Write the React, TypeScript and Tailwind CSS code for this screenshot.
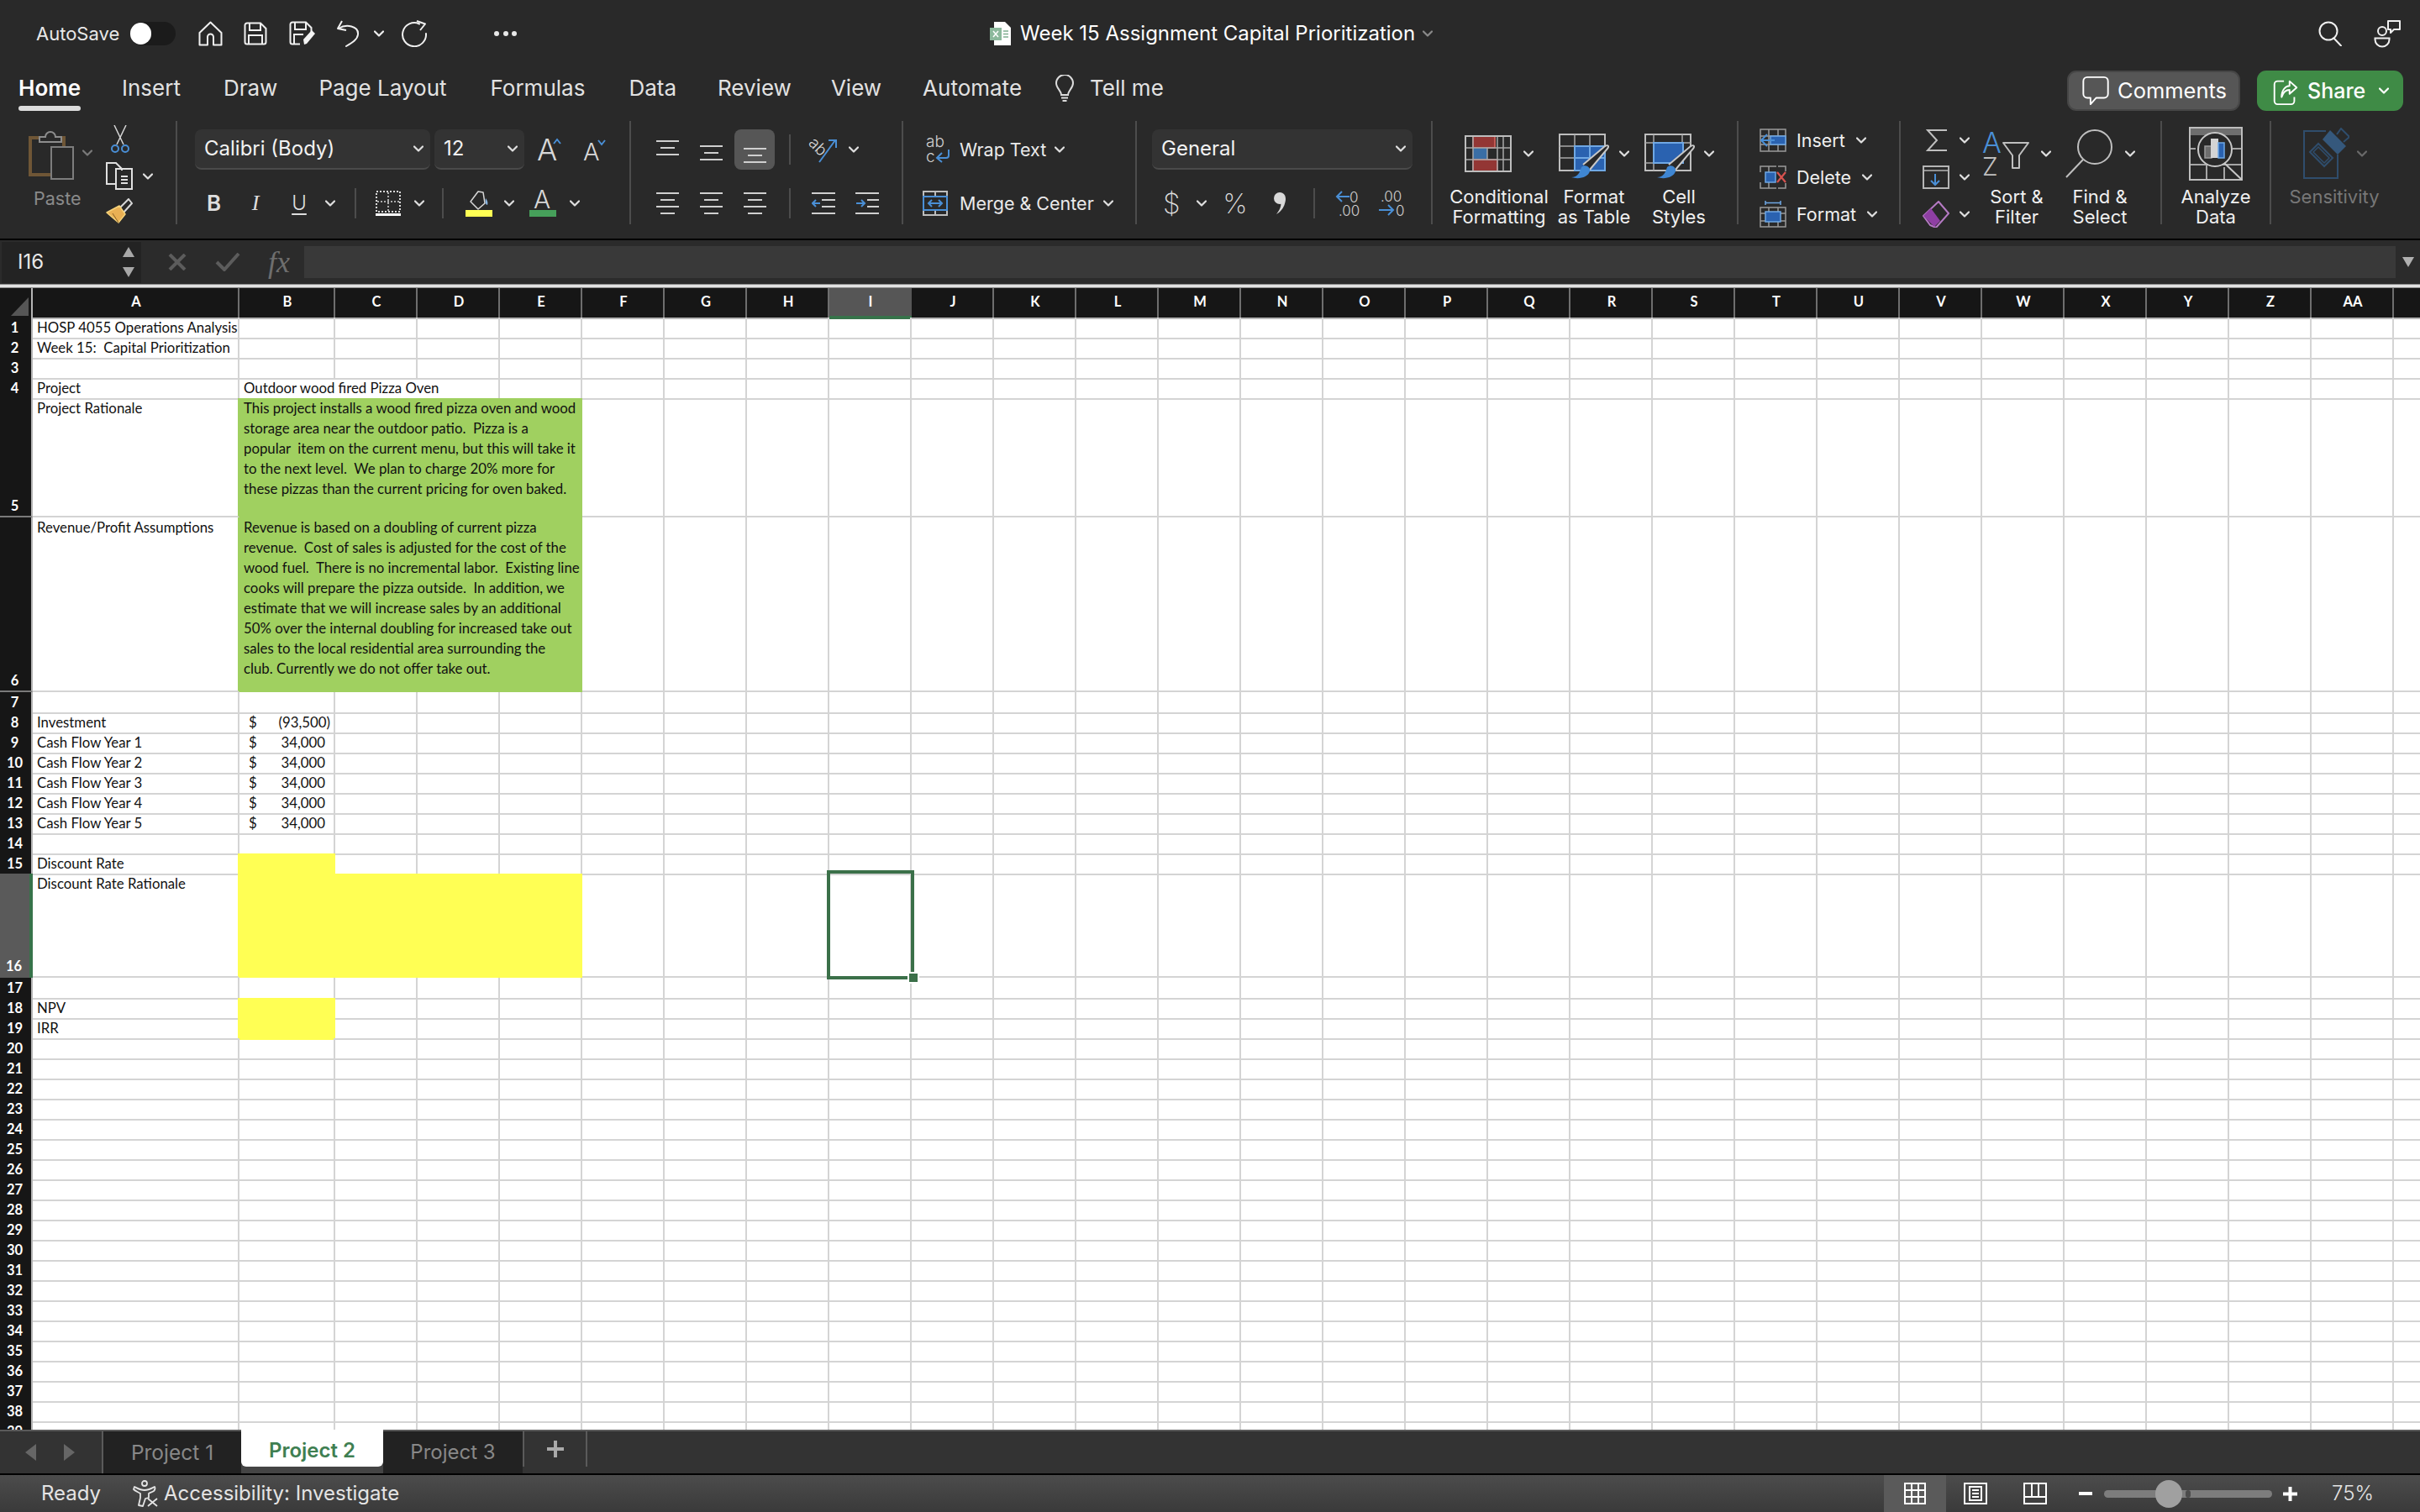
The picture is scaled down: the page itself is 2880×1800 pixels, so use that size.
import React from "react";

const GRID = "border-[#d4d4d4]";
const COLS = ["C","D","E","F","G","H","I","J","K","L","M","N","O","P","Q","R","S","T","U","V","W","X","Y","Z","AA",""];
const ROWS = Array.from({ length: 39 }, (_, i) => i + 1);

const LABELS: Record<number, string> = {
  1: "HOSP 4055 Operations Analysis",
  2: "Week 15:  Capital Prioritization",
  4: "Project",
  5: "Project Rationale",
  6: "Revenue/Profit Assumptions",
  8: "Investment",
  9: "Cash Flow Year 1",
  10: "Cash Flow Year 2",
  11: "Cash Flow Year 3",
  12: "Cash Flow Year 4",
  13: "Cash Flow Year 5",
  15: "Discount Rate",
  16: "Discount Rate Rationale",
  18: "NPV",
  19: "IRR",
};

const RATIONALE = [
  "This project installs a wood fired pizza oven and wood",
  "storage area near the outdoor patio.  Pizza is a",
  "popular  item on the current menu, but this will take it",
  "to the next level.  We plan to charge 20% more for",
  "these pizzas than the current pricing for oven baked.",
];

const ASSUMPTIONS = [
  "Revenue is based on a doubling of current pizza",
  "revenue.  Cost of sales is adjusted for the cost of the",
  "wood fuel.  There is no incremental labor.  Existing line",
  "cooks will prepare the pizza outside.  In addition, we",
  "estimate that we will increase sales by an additional",
  "50% over the internal doubling for increased take out",
  "sales to the local residential area surrounding the",
  "club. Currently we do not offer take out.",
];

function rowHeight(n: number) {
  if (n === 5) return "h-[142px]";
  if (n === 6) return "h-[208px]";
  if (n === 16) return "h-[124px]";
  return "h-[24px]";
}

function Chev({ className = "", color = "#e0e0e0" }: { className?: string; color?: string }) {
  return (
    <svg viewBox="0 0 12 8" fill="none" className={`w-[12px] h-[8px] shrink-0 ${className}`}>
      <path d="M1 1.5 6 6.5 11 1.5" stroke={color} strokeWidth="2.2" strokeLinecap="round" strokeLinejoin="round" />
    </svg>
  );
}

function Divider() {
  return <div className="w-[2px] h-[123px] bg-[#4c4c4c] shrink-0" />;
}

function ShortDivider({ className = "" }: { className?: string }) {
  return <div className={`w-[2px] h-[36px] bg-[#4c4c4c] shrink-0 ${className}`} />;
}

function Lines({ y, className = "" }: { y: number[]; className?: string }) {
  return (
    <svg viewBox="0 0 27 26" className={`w-[27px] h-[26px] shrink-0 ${className}`}>
      {y.map((v, i) => (
        <rect key={i} x={i % 2 === 0 ? 0 : 5} y={v} width={i % 2 === 0 ? 27 : 17} height="2" fill="#cfcfcf" />
      ))}
    </svg>
  );
}

function TitleBar() {
  return (
    <div className="h-[80px] flex items-center text-[#e8e8e8] shrink-0">
      <span className="ml-[43px] w-[112px] text-[22px] leading-[30px]">AutoSave</span>
      <div className="w-[54px] h-[28px] rounded-full bg-[#1b1b1b] flex items-center">
        <div className="w-[25px] h-[26px] rounded-full bg-white" />
      </div>
      <svg viewBox="0 0 29 30" fill="none" stroke="#f0f0f0" strokeWidth="2" className="ml-[27px] w-[29px] h-[30px]">
        <path d="M1.5 14 14.5 1.5 27.5 14V28.5H18V19a3.5 3.5 0 0 0-7 0V28.5H1.5Z" strokeLinejoin="round" />
      </svg>
      <svg viewBox="0 0 28 28" fill="none" stroke="#f0f0f0" strokeWidth="2" className="ml-[25px] w-[28px] h-[28px]">
        <path d="M4 1.5H20L26.5 8V24a2.5 2.5 0 0 1-2.5 2.5H4A2.5 2.5 0 0 1 1.5 24V4A2.5 2.5 0 0 1 4 1.5Z" />
        <path d="M7 1.5V10H20V1.5M6 26.5V16H22V26.5" />
      </svg>
      <svg viewBox="0 0 32 30" fill="none" className="ml-[26px] w-[32px] h-[30px]">
        <path d="M13 27.5H4A2.5 2.5 0 0 1 1.5 25V4A2.5 2.5 0 0 1 4 1.5H20L26.5 8V13" stroke="#f0f0f0" strokeWidth="2" />
        <path d="M7 1.5V10H20V1.5M6 27V16H17" stroke="#f0f0f0" strokeWidth="2" />
        <path d="M18 28 17 22 27 11 31 15 21 27Z" fill="#f4f4f4" />
      </svg>
      <svg viewBox="0 0 28 32" fill="none" stroke="#f0f0f0" strokeWidth="2" className="ml-[24px] w-[28px] h-[32px]">
        <path d="M7 1 2 10 12 12" strokeLinejoin="round" />
        <path d="M3 10C12 4 27 7 26 17 25.5 23 19 27 12 31" strokeLinecap="round" />
      </svg>
      <Chev className="ml-[17px]" color="#f0f0f0" />
      <svg viewBox="0 0 32 32" fill="none" stroke="#f0f0f0" strokeWidth="2" className="ml-[20px] w-[32px] h-[32px]">
        <path d="M22 4.5A14 14 0 1 0 30 16" strokeLinecap="round" />
        <path d="M19 1 29 4.5 23 12" strokeLinejoin="round" />
      </svg>
      <div className="ml-[79px] w-[27px] flex justify-between">
        <div className="w-[6px] h-[6px] rounded-full bg-[#e8e8e8]" />
        <div className="w-[6px] h-[6px] rounded-full bg-[#e8e8e8]" />
        <div className="w-[6px] h-[6px] rounded-full bg-[#e8e8e8]" />
      </div>
      <svg viewBox="0 0 26 30" className="ml-[563px] w-[26px] h-[30px]">
        <path d="M5 1H18L25 8V29H5Z" fill="#ffffff" />
        <rect x="0" y="8" width="14" height="15" fill="#8cb99c" />
        <path d="M4 12 10 19M10 12 4 19" stroke="#ffffff" strokeWidth="1.5" />
        <path d="M16 12H22M16 15.5H22M16 19H22" stroke="#7fae90" strokeWidth="1.5" />
      </svg>
      <span className="ml-[10px] w-[470px] text-[24px] leading-[32px] text-white whitespace-nowrap">Week 15 Assignment Capital Prioritization</span>
      <Chev className="ml-[9px]" color="#8a8a8a" />
      <svg viewBox="0 0 28 30" fill="none" stroke="#efefef" strokeWidth="2" className="ml-[1054px] w-[28px] h-[30px]">
        <circle cx="12" cy="12" r="10.5" />
        <path d="M18.5 20.5 27 29.5" strokeLinecap="round" />
      </svg>
      <svg viewBox="0 0 33 34" fill="none" stroke="#efefef" strokeWidth="2" className="ml-[38px] w-[33px] h-[34px]">
        <circle cx="10" cy="14" r="5" />
        <path d="M1.5 22.5H18.5V24A8.5 8.5 0 0 1 1.5 24Z" />
        <path d="M17 2H31V12H24L20 16V12H17Z" strokeLinejoin="round" />
      </svg>
    </div>
  );
}

function RibbonTabs() {
  const tabs: [string, string][] = [
    ["Insert", "ml-[49px]"],
    ["Draw", "ml-[51px]"],
    ["Page Layout", "ml-[49px]"],
    ["Formulas", "ml-[52px]"],
    ["Data", "ml-[52px]"],
    ["Review", "ml-[49px]"],
    ["View", "ml-[47px]"],
    ["Automate", "ml-[49px]"],
  ];
  return (
    <div className="h-[64px] flex items-start shrink-0 text-[#e2e2e2]">
      <div className="ml-[22px] mt-[9px] flex flex-col">
        <span className="text-[26px] leading-[32px] font-semibold text-white">Home</span>
        <div className="mt-[5px] h-[6px] rounded-full bg-[#dcdcdc]" />
      </div>
      {tabs.map(([name, margin]) => (
        <span key={name} className={`${margin} mt-[9px] text-[26px] leading-[32px] whitespace-nowrap`}>{name}</span>
      ))}
      <svg viewBox="0 0 24 32" fill="none" stroke="#dcdcdc" strokeWidth="2" className="ml-[39px] mt-[9px] w-[24px] h-[32px]">
        <path d="M8 24C8 19 2 16 2 10A10 10 0 0 1 22 10C22 16 16 19 16 24Z" />
        <path d="M8 27.5H16M9.5 31H14.5" />
      </svg>
      <span className="ml-[18px] mt-[9px] text-[26px] leading-[32px] whitespace-nowrap">Tell me</span>
      <div className="ml-auto mt-[4px] w-[206px] h-[48px] rounded-[11px] bg-[#565656] border-2 border-[#464646] flex items-center text-white">
        <svg viewBox="0 0 34 38" fill="none" stroke="#ffffff" strokeWidth="2" className="ml-[16px] w-[33px] h-[36px]">
          <path d="M6 2H27A5 5 0 0 1 32 7V23A5 5 0 0 1 27 28H17L10 36V28H6A5 5 0 0 1 1 23V7A5 5 0 0 1 6 2Z" strokeLinejoin="round" />
        </svg>
        <span className="ml-[9px] text-[25.5px] leading-[32px]">Comments</span>
      </div>
      <div className="ml-[20px] mr-[20px] mt-[4px] w-[174px] h-[48px] rounded-[11px] bg-[#3f8b46] flex items-center text-white">
        <svg viewBox="0 0 30 38" fill="none" stroke="#ffffff" strokeWidth="2" className="ml-[19px] w-[30px] h-[36px]">
          <path d="M13 7H5A4 4 0 0 0 1 11V32A4 4 0 0 0 5 36H22A4 4 0 0 0 26 32V27" />
          <path d="M10 27C10 18 15 13 20 13V7L29 15 20 23V18C15 18 12 21 10 27Z" strokeLinejoin="round" />
        </svg>
        <span className="ml-[11px] text-[25px] leading-[32px] font-medium">Share</span>
        <Chev className="ml-[16px]" color="#ffffff" />
      </div>
    </div>
  );
}

function Dropdown({ text, width, textClass = "" }: { text: string; width: string; textClass?: string }) {
  return (
    <div className={`${width} h-[48px] rounded-[8px] bg-[#333333] border-b-2 border-[#4a4a4a] flex items-center justify-between pl-[11px] pr-[8px] shrink-0`}>
      <span className={`text-[24px] leading-[30px] text-[#f2f2f2] ${textClass}`}>{text}</span>
      <Chev />
    </div>
  );
}

function RibbonClipboard() {
  return (
    <div className="w-[209px] h-[123px] flex shrink-0">
      <div className="ml-[34px] w-[64px] flex flex-col">
        <svg viewBox="0 0 54 60" fill="none" className="mt-[10px] w-[54px] h-[60px]">
          <path d="M13 10H2V54H26" stroke="#6f5636" strokeWidth="4" />
          <path d="M39 10H42V20" stroke="#6f5636" strokeWidth="4" />
          <path d="M13 15V9H20A6 6 0 0 1 32 9H39V15Z" stroke="#8d8d8d" strokeWidth="2" />
          <rect x="27" y="21" width="26" height="38" stroke="#7d7d7d" strokeWidth="2" />
        </svg>
        <span className="mt-[8px] ml-[6px] text-[21.5px] leading-[28px] text-[#8a8a8a]">Paste</span>
      </div>
      <Chev className="mt-[34px]" color="#7a7a7a" />
      <div className="ml-[16px] flex flex-col">
        <svg viewBox="0 0 22 34" fill="none" className="ml-[6px] mt-[5px] w-[22px] h-[34px]">
          <path d="M4 0 15 23M18 0 7 23" stroke="#d5d5d5" strokeWidth="1.5" />
          <circle cx="5" cy="28" r="4" stroke="#4a8fd6" strokeWidth="2" />
          <circle cx="17" cy="28" r="4" stroke="#4a8fd6" strokeWidth="2" />
        </svg>
        <div className="mt-[10px] flex items-center">
          <svg viewBox="0 0 32 33" fill="none" stroke="#e0e0e0" strokeWidth="2" className="w-[32px] h-[33px]">
            <path d="M12 26H1V1H12L19 8V10" />
            <path d="M12 8H31V32H12Z" />
            <path d="M18 17H26M18 21H26M18 25H26" />
          </svg>
          <Chev className="ml-[12px]" />
        </div>
        <svg viewBox="0 0 32 30" fill="none" className="mt-[10px] w-[32px] h-[30px]">
          <path d="M16 12 27 1 31 6 21 17" stroke="#d8d8d8" strokeWidth="2" strokeLinejoin="round" />
          <path d="M1 17 16 9 23 19 15 29Z" fill="#e9b054" stroke="#f6d37a" strokeWidth="1.5" strokeLinejoin="round" />
          <path d="M8 18 15 29" stroke="#8a6428" strokeWidth="1" />
        </svg>
      </div>
    </div>
  );
}

function RibbonFont() {
  return (
    <div className="w-[538px] h-[123px] flex flex-col shrink-0 text-[#e4e4e4]">
      <div className="mt-[10px] h-[48px] flex items-center">
        <Dropdown text="Calibri (Body)" width="w-[280px] ml-[21px]" />
        <Dropdown text="12" width="w-[107px] ml-[5px]" />
        <svg viewBox="0 0 30 28" fill="none" className="ml-[15px] w-[30px] h-[28px] overflow-visible">
          <text x="0" y="27" fontFamily="Inter" fontWeight="300" fontSize="36" fill="#d8d8d8">A</text>
          <path d="M20 7 24 2 28 7" stroke="#4a8fd6" strokeWidth="2" />
        </svg>
        <svg viewBox="0 0 28 28" fill="none" className="ml-[25px] w-[28px] h-[28px] overflow-visible">
          <text x="0" y="27" fontFamily="Inter" fontWeight="300" fontSize="29" fill="#d8d8d8">A</text>
          <path d="M18 3 22 8 26 3" stroke="#4a8fd6" strokeWidth="2" />
        </svg>
      </div>
      <div className="mt-[22px] h-[36px] flex items-center">
        <span className="ml-[35px] w-[14px] text-center text-[26px] leading-[32px] font-semibold text-[#dedede]">B</span>
        <span className="ml-[38px] w-[12px] text-center text-[26px] leading-[32px] italic font-light font-['Liberation_Serif',serif] text-[#dedede]">I</span>
        <span className="ml-[37px] w-[18px] text-center text-[24px] leading-[30px] font-light underline underline-offset-4 decoration-2 text-[#dedede]">U</span>
        <Chev className="ml-[22px]" />
        <ShortDivider className="ml-[23px]" />
        <svg viewBox="0 0 30 30" fill="none" className="ml-[23px] w-[30px] h-[30px]">
          <rect x="1" y="1" width="28" height="24" stroke="#d8d8d8" strokeWidth="2" strokeDasharray="2 2" />
          <path d="M15 2V24M2 13H28" stroke="#d8d8d8" strokeWidth="1.5" strokeDasharray="2 2" />
          <rect x="0" y="27" width="30" height="3" fill="#ffffff" />
        </svg>
        <Chev className="ml-[16px]" />
        <ShortDivider className="ml-[21px]" />
        <svg viewBox="0 0 32 32" fill="none" className="ml-[26px] w-[32px] h-[32px]">
          <path d="M15 2 21 3 23 16 15 23 6 14Z" stroke="#d8d8d8" strokeWidth="1.5" strokeLinejoin="round" />
          <path d="M24 10C26 13 27 15 26 18 24 18 23 14 24 10Z" fill="#8ab7e4" />
          <rect x="0" y="24" width="32" height="8" fill="#ffff54" />
        </svg>
        <Chev className="ml-[14px]" />
        <svg viewBox="0 0 32 32" fill="none" className="ml-[18px] w-[32px] h-[32px] overflow-visible">
          <text x="5" y="22" fontFamily="Inter" fontWeight="300" fontSize="30" fill="#d8d8d8">A</text>
          <rect x="0" y="24" width="32" height="8" fill="#46a05a" />
        </svg>
        <Chev className="ml-[16px]" />
      </div>
    </div>
  );
}

function RibbonAlignment() {
  return (
    <div className="w-[322px] h-[123px] flex flex-col shrink-0">
      <div className="mt-[10px] h-[48px] flex items-center">
        <Lines y={[8, 16, 24]} className="ml-[30px] -translate-y-[6px]" />
        <Lines y={[8, 16, 24]} className="ml-[25px]" />
        <div className="ml-[14px] w-[48px] h-[48px] rounded-[8px] bg-[#565656] flex justify-center items-end pb-[8px] shrink-0">
          <Lines y={[8, 16, 24]} />
        </div>
        <ShortDivider className="ml-[17px]" />
        <svg viewBox="0 0 34 32" fill="none" className="ml-[22px] w-[34px] h-[32px] overflow-visible">
          <text x="0" y="15" transform="rotate(45 6 10)" fontFamily="Inter" fontWeight="300" fontSize="19" fill="#d8d8d8">ab</text>
          <path d="M12 31 31 5M23 5H32V14" stroke="#4a8fd6" strokeWidth="2" />
        </svg>
        <Chev className="ml-[13px]" />
      </div>
      <div className="mt-[22px] h-[36px] flex items-center">
        <Lines y={[0, 8, 16, 24]} className="ml-[30px]" />
        <Lines y={[0, 8, 16, 24]} className="ml-[25px]" />
        <Lines y={[0, 8, 16, 24]} className="ml-[25px]" />
        <ShortDivider className="ml-[27px]" />
        <svg viewBox="0 0 28 26" fill="none" className="ml-[25px] w-[28px] h-[26px]">
          <path d="M0 1H28M12 9H28M12 17H28M0 25H28" stroke="#cfcfcf" strokeWidth="2" />
          <path d="M10 13H1M5 9 1 13 5 17" stroke="#4a8fd6" strokeWidth="2" />
        </svg>
        <svg viewBox="0 0 28 26" fill="none" className="ml-[24px] w-[28px] h-[26px]">
          <path d="M0 1H28M14 9H28M14 17H28M0 25H28" stroke="#cfcfcf" strokeWidth="2" />
          <path d="M1 13H11M7 9 11 13 7 17" stroke="#4a8fd6" strokeWidth="2" />
        </svg>
      </div>
    </div>
  );
}

function RibbonWrap() {
  return (
    <div className="w-[276px] h-[123px] flex flex-col shrink-0 text-[#eaeaea]">
      <div className="mt-[10px] h-[48px] flex items-center">
        <svg viewBox="0 0 30 34" fill="none" className="ml-[27px] w-[30px] h-[34px] overflow-visible">
          <text x="0" y="14" fontFamily="Inter" fontWeight="300" fontSize="19" fill="#cfcfcf">ab</text>
          <text x="0" y="32" fontFamily="Inter" fontWeight="300" fontSize="19" fill="#cfcfcf">c</text>
          <path d="M27 17V24A3 3 0 0 1 24 27H14M19 21 13 27 19 32" stroke="#4a8fd6" strokeWidth="2" />
        </svg>
        <span className="ml-[10px] text-[21.5px] leading-[28px] whitespace-nowrap">Wrap Text</span>
        <Chev className="ml-[10px]" />
      </div>
      <div className="mt-[22px] h-[36px] flex items-center">
        <svg viewBox="0 0 30 30" fill="none" className="ml-[23px] w-[30px] h-[30px]">
          <rect x="1" y="1" width="28" height="28" stroke="#bdbdbd" strokeWidth="2" />
          <path d="M15 1V7M15 23V29" stroke="#bdbdbd" strokeWidth="2" />
          <rect x="1" y="7" width="28" height="16" stroke="#4a8fd6" strokeWidth="2" />
          <path d="M7 15H23M11 11 7 15 11 19M19 11 23 15 19 19" stroke="#4a8fd6" strokeWidth="2" />
        </svg>
        <span className="ml-[14px] text-[21.5px] leading-[28px] whitespace-nowrap">Merge &amp; Center</span>
        <Chev className="ml-[11px]" />
      </div>
    </div>
  );
}

function RibbonNumber() {
  return (
    <div className="w-[350px] h-[123px] flex flex-col shrink-0 text-[#dcdcdc]">
      <div className="mt-[10px] h-[48px] flex items-center">
        <Dropdown text="General" width="w-[310px] ml-[18px]" />
      </div>
      <div className="mt-[22px] h-[36px] flex items-center">
        <span className="ml-[31px] w-[18px] text-center text-[33px] leading-[36px] font-extralight">$</span>
        <Chev className="ml-[22px]" />
        <span className="ml-[18px] w-[32px] text-center text-[33px] leading-[36px] font-extralight">%</span>
        <svg viewBox="0 0 16 26" className="ml-[29px] w-[16px] h-[26px]">
          <circle cx="8" cy="7" r="7" fill="#d8d8d8" />
          <path d="M15 7C15 15 11 22 4 26 9 20 10 15 9 12Z" fill="#d8d8d8" />
        </svg>
        <ShortDivider className="ml-[32px]" />
        <svg viewBox="0 0 32 32" fill="none" className="ml-[24px] w-[32px] h-[32px] overflow-visible">
          <text x="17" y="15" fontFamily="Inter" fontWeight="300" fontSize="17" fill="#cfcfcf">0</text>
          <text x="4" y="31" fontFamily="Inter" fontWeight="300" fontSize="17" fill="#cfcfcf">.00</text>
          <path d="M17 8H2M8 2 2 8 8 14" stroke="#4a8fd6" strokeWidth="2" />
        </svg>
        <svg viewBox="0 0 32 32" fill="none" className="ml-[19px] w-[32px] h-[32px] overflow-visible">
          <text x="3" y="14" fontFamily="Inter" fontWeight="300" fontSize="17" fill="#cfcfcf">.00</text>
          <text x="21" y="31" fontFamily="Inter" fontWeight="300" fontSize="17" fill="#cfcfcf">0</text>
          <path d="M1 24H18M12 18 18 24 12 30" stroke="#4a8fd6" strokeWidth="2" />
        </svg>
      </div>
    </div>
  );
}

function BigButton({ width, lines, icon, chevClass = "ml-[9px]", dim = false }: { width: string; lines: string[]; icon: React.ReactNode; chevClass?: string; dim?: boolean }) {
  return (
    <div className={`${width} flex flex-col items-center shrink-0`}>
      <div className="h-[78px] shrink-0 flex items-center">
        {icon}
        <Chev className={chevClass} color={dim ? "#6a6a6a" : "#e0e0e0"} />
      </div>
      {lines.map((l) => (
        <span key={l} className={`text-[22px] leading-[24px] whitespace-nowrap shrink-0 ${dim ? "text-[#777777]" : "text-[#f0f0f0]"}`}>{l}</span>
      ))}
    </div>
  );
}

function BrushedGrid({ children }: { children: React.ReactNode }) {
  return (
    <svg viewBox="0 0 60 56" fill="none" className="w-[60px] h-[56px] shrink-0 mt-[8px]">
      {children}
      <path d="M29 37 55 15C59 13 60 15 58 18L37 43" fill="#292929" stroke="#c8c8c8" strokeWidth="2" />
      <path d="M15 52C23 52 25 46 27 40 32 36 38 40 37 45 35 52 24 55 15 52Z" fill="#3f86d2" />
    </svg>
  );
}

function RibbonStyles() {
  return (
    <div className="w-[362px] h-[123px] flex shrink-0">
      <BigButton
        width="w-[114px] ml-[22px]"
        chevClass="ml-[14px]"
        lines={["Conditional", "Formatting"]}
        icon={
          <svg viewBox="0 0 56 44" fill="none" className="w-[56px] h-[44px]">
            <rect x="10" y="1" width="26" height="14" fill="#933634" stroke="#c25a54" strokeWidth="2" />
            <rect x="10" y="15" width="17" height="14" fill="#3a6ea5" />
            <rect x="10" y="29" width="29" height="14" fill="#933634" stroke="#c25a54" strokeWidth="2" />
            <path d="M10 1V43M27 15V29M39 1V43M46 1V43M1 15H55M1 29H55" stroke="#a8a8a8" strokeWidth="1.5" />
            <rect x="1" y="1" width="54" height="42" stroke="#bdbdbd" strokeWidth="2" />
          </svg>
        }
      />
      <BigButton
        width="w-[90px] ml-[11px]"
        chevClass="ml-[12px]"
        lines={["Format", "as Table"]}
        icon={
          <BrushedGrid>
            <rect x="1" y="1" width="54" height="43" stroke="#bdbdbd" strokeWidth="2" />
            <path d="M19 1V44M37 1V44M1 15H55M1 29H55" stroke="#a8a8a8" strokeWidth="1.5" />
            <rect x="19" y="15" width="36" height="29" fill="#2a62b0" stroke="#6fa8e4" strokeWidth="2" />
            <path d="M37 15V44M19 29H55" stroke="#6fa8e4" strokeWidth="2" />
          </BrushedGrid>
        }
      />
      <BigButton
        width="w-[90px] ml-[11px]"
        chevClass="ml-[11px]"
        lines={["Cell", "Styles"]}
        icon={
          <BrushedGrid>
            <rect x="1" y="1" width="54" height="43" stroke="#bdbdbd" strokeWidth="2" />
            <path d="M11 1V44M45 1V12M1 11H55M1 35H20" stroke="#a8a8a8" strokeWidth="1.5" />
            <rect x="11" y="11" width="35" height="24" fill="#2a62b0" stroke="#6fa8e4" strokeWidth="2" />
          </BrushedGrid>
        }
      />
    </div>
  );
}

function CellRow({ label, icon, className = "" }: { label: string; icon: React.ReactNode; className?: string }) {
  return (
    <div className={`h-[30px] shrink-0 flex items-center ${className}`}>
      <div className="ml-[25px] w-[32px] flex justify-center shrink-0">{icon}</div>
      <span className="ml-[12px] text-[21.5px] leading-[28px] text-[#efefef]">{label}</span>
      <Chev className="ml-[13px]" />
    </div>
  );
}

function RibbonCells() {
  return (
    <div className="w-[191px] h-[123px] flex flex-col shrink-0">
      <CellRow
        className="mt-[8px]"
        label="Insert"
        icon={
          <svg viewBox="0 0 32 28" fill="none" className="w-[32px] h-[28px]">
            <path d="M1 1H31V27H1ZM11 1V27M22 1V27M1 9H31M1 19H31" stroke="#9a9a9a" strokeWidth="1.5" />
            <rect x="13" y="9" width="18" height="10" fill="#2a62b0" stroke="#6fa8e4" strokeWidth="1.5" />
            <path d="M18 14H2M9 7 2 14 9 21" stroke="#4a8fd6" strokeWidth="2" />
          </svg>
        }
      />
      <CellRow
        className="mt-[14px]"
        label="Delete"
        icon={
          <svg viewBox="0 0 32 28" fill="none" className="w-[32px] h-[28px]">
            <path d="M20 1H1V8M1 20V27H20M11 1V8M11 20V27M22 1H31V7M22 27H31V21" stroke="#9a9a9a" strokeWidth="1.5" />
            <rect x="7" y="8" width="12" height="12" fill="#2a62b0" stroke="#6fa8e4" strokeWidth="1.5" />
            <path d="M21 8 31 20M31 8 21 20" stroke="#d9534f" strokeWidth="2.2" />
          </svg>
        }
      />
      <CellRow
        className="mt-[14px]"
        label="Format"
        icon={
          <svg viewBox="0 0 32 32" fill="none" className="w-[32px] h-[32px]">
            <path d="M1 8H31V31H1ZM11 8V31M22 8V31M1 15H31M1 24H31" stroke="#9a9a9a" strokeWidth="1.5" />
            <rect x="7" y="13" width="18" height="12" fill="#2a62b0" stroke="#6fa8e4" strokeWidth="1.5" />
            <path d="M7 0V5M25 0V5M7 2.5H25" stroke="#6fa8e4" strokeWidth="1.5" />
          </svg>
        }
      />
    </div>
  );
}

function RibbonEditing() {
  return (
    <div className="w-[309px] h-[123px] flex shrink-0">
      <div className="ml-[26px] w-[56px] flex flex-col shrink-0">
        <div className="mt-[8px] h-[30px] shrink-0 flex items-center">
          <svg viewBox="0 0 26 28" fill="none" className="ml-[4px] w-[26px] h-[28px]">
            <path d="M25 2H2L13 14 2 26H25" stroke="#bfbfbf" strokeWidth="2" />
          </svg>
          <Chev className="ml-[14px]" />
        </div>
        <div className="mt-[14px] h-[30px] shrink-0 flex items-center">
          <svg viewBox="0 0 32 28" fill="none" className="w-[32px] h-[28px]">
            <rect x="1" y="1" width="30" height="26" stroke="#b5b5b5" strokeWidth="2" />
            <path d="M1 6H31" stroke="#b5b5b5" strokeWidth="1.5" />
            <path d="M15 10V23M10 18 15 23 20 18" stroke="#4a8fd6" strokeWidth="2" />
          </svg>
          <Chev className="ml-[12px]" />
        </div>
        <div className="mt-[14px] h-[30px] shrink-0 flex items-center">
          <svg viewBox="0 0 32 32" fill="none" className="w-[32px] h-[32px]">
            <path d="M1 18 9 29 16 32 31 15 19 1Z" stroke="#b57ac4" strokeWidth="2" strokeLinejoin="round" />
            <path d="M1 18 10 9 21 24 14 31Z" fill="#8e3fa3" />
          </svg>
          <Chev className="ml-[12px]" />
        </div>
      </div>
      <BigButton
        width="w-[90px] ml-[11px]"
        chevClass="ml-[14px]"
        lines={["Sort &", "Filter"]}
        icon={
          <svg viewBox="0 0 56 54" fill="none" className="w-[56px] h-[54px] overflow-visible">
            <text x="0" y="26" fontFamily="Inter" fontWeight="300" fontSize="34" fill="#4a8fd6">A</text>
            <text x="0" y="53" fontFamily="Inter" fontWeight="300" fontSize="30" fill="#bfbfbf">Z</text>
            <path d="M25 14H55L44 29V44H36V29Z" stroke="#bfbfbf" strokeWidth="2" strokeLinejoin="round" />
          </svg>
        }
      />
      <BigButton
        width="w-[90px] ml-[9px]"
        chevClass="ml-[14px]"
        lines={["Find &", "Select"]}
        icon={
          <svg viewBox="0 0 58 58" fill="none" className="w-[58px] h-[58px]">
            <ellipse cx="36" cy="21" rx="20" ry="20" stroke="#bfbfbf" strokeWidth="2" />
            <path d="M22 36 2 57" stroke="#bfbfbf" strokeWidth="2" />
          </svg>
        }
      />
    </div>
  );
}

function RibbonAnalyze() {
  return (
    <div className="w-[128px] h-[123px] flex flex-col items-center shrink-0">
      <div className="h-[78px] shrink-0 flex items-center">
        <svg viewBox="0 0 64 64" fill="none" className="w-[64px] h-[64px]">
          <rect x="1" y="1" width="62" height="62" stroke="#bdbdbd" strokeWidth="2" />
          <rect x="2" y="2" width="60" height="8" fill="#6e6e6e" />
          <path d="M2 26H8M52 26H62M2 45H62M21 45V62M42 48V62" stroke="#a5a5a5" strokeWidth="2" />
          <circle cx="31" cy="27" r="20" fill="#292929" stroke="#c8c8c8" strokeWidth="2" />
          <rect x="19" y="23" width="8" height="14" fill="#6e6e6e" stroke="#9a9a9a" strokeWidth="1.5" />
          <rect x="26" y="14" width="9" height="23" fill="#d4d4d4" />
          <rect x="35" y="19" width="7" height="18" fill="#2a62b0" stroke="#6fa8e4" strokeWidth="1.5" />
          <path d="M42 43 63 63" stroke="#c8c8c8" strokeWidth="2" />
        </svg>
      </div>
      <span className="text-[22px] leading-[24px] shrink-0 text-[#f0f0f0]">Analyze</span>
      <span className="text-[22px] leading-[24px] shrink-0 text-[#f0f0f0]">Data</span>
    </div>
  );
}

function RibbonSensitivity() {
  return (
    <BigButton
      width="w-[150px]"
      lines={["Sensitivity"]}
      dim
      icon={
        <svg viewBox="0 0 56 62" fill="none" className="w-[56px] h-[62px]">
          <path d="M28 4H2V60H42V32" stroke="#2f4d6c" strokeWidth="2" />
          <path d="M9 29 19 19 36 36 26 46Z" stroke="#2f4d6c" strokeWidth="2" />
          <path d="M13 29 19 23 32 36 26 42Z" stroke="#2f4d6c" strokeWidth="1.5" />
          <path d="M24 14 33 3 52 22 42 32Z" fill="#35587c" />
          <path d="M41 8 46 1 56 11 49 17" stroke="#2f4d6c" strokeWidth="2" />
        </svg>
      }
    />
  );
}

function Ribbon() {
  return (
    <div className="h-[142px] flex items-start shrink-0 border-b-2 border-[#000000] overflow-hidden">
      <RibbonClipboard />
      <Divider />
      <RibbonFont />
      <Divider />
      <RibbonAlignment />
      <Divider />
      <RibbonWrap />
      <Divider />
      <RibbonNumber />
      <Divider />
      <RibbonStyles />
      <Divider />
      <RibbonCells />
      <Divider />
      <RibbonEditing />
      <Divider />
      <RibbonAnalyze />
      <Divider />
      <RibbonSensitivity />
    </div>
  );
}

function FormulaBar() {
  return (
    <div className="h-[52px] flex items-center shrink-0 bg-[#2b2b2b]">
      <div className="ml-[2px] w-[166px] h-[49px] bg-[#232323] flex items-center shrink-0">
        <span className="ml-[19px] w-[125px] text-[24px] leading-[30px] text-[#e8e8e8]">I16</span>
        <div className="flex flex-col gap-[12px]">
          <div className="w-0 h-0 border-x-[7px] border-x-transparent border-b-[12px] border-b-[#a8a8a8]" />
          <div className="w-0 h-0 border-x-[7px] border-x-transparent border-t-[12px] border-t-[#a8a8a8]" />
        </div>
      </div>
      <svg viewBox="0 0 22 20" fill="none" className="ml-[32px] w-[22px] h-[20px]">
        <path d="M2 1 20 19M20 1 2 19" stroke="#5c5c5c" strokeWidth="4" />
      </svg>
      <svg viewBox="0 0 30 22" fill="none" className="ml-[34px] w-[30px] h-[22px]">
        <path d="M2 11 11 20 28 1" stroke="#5c5c5c" strokeWidth="4" />
      </svg>
      <span className="ml-[30px] w-[32px] text-center text-[36px] leading-[36px] italic text-[#6e6e6e] font-['Liberation_Serif',serif]">fx</span>
      <div className="ml-[14px] flex-1 h-[38px] bg-[#393939]" />
      <div className="ml-[8px] mr-[7px] w-0 h-0 border-x-[7px] border-x-transparent border-t-[12px] border-t-[#b0b0b0]" />
    </div>
  );
}

function ColumnHeader() {
  return (
    <div className="grid grid-cols-[39px_246px_114px_repeat(26,98px)] h-[35px] bg-[#161616] shrink-0 text-white text-[16.5px] leading-[33px] font-bold">
      <div className="border-r-2 border-b-2 border-[#b5b5b5] flex items-end justify-end pr-[3px] pb-[2px]">
        <div className="w-0 h-0 border-l-[21px] border-l-transparent border-b-[22px] border-b-[#565656]" />
      </div>
      <div className="border-r-2 border-r-[#6e6e6e] border-b-2 border-b-[#b5b5b5] text-center pl-[2px]">A</div>
      <div className="border-r-2 border-r-[#6e6e6e] border-b-2 border-b-[#b5b5b5] text-center pl-[2px]">B</div>
      {COLS.map((c, i) =>
        c === "I" ? (
          <div key={i} className="bg-[#565656] border-b-4 border-[#37734a] text-center">{c}</div>
        ) : (
          <div key={i} className="border-r-2 border-r-[#6e6e6e] border-b-2 border-b-[#b5b5b5] text-center pl-[2px]">{c}</div>
        )
      )}
    </div>
  );
}

function TextLines({ lines }: { lines: string[] }) {
  return (
    <>
      {lines.map((l) => (
        <div key={l} className="whitespace-pre">{l}</div>
      ))}
    </>
  );
}

function Money({ value, neg = false }: { value: string; neg?: boolean }) {
  return (
    <div className={`border-r-2 border-b-2 ${GRID} flex justify-between pl-[11px] ${neg ? "pr-[4px]" : "pr-[10px]"}`}>
      <span>$</span>
      <span>{value}</span>
    </div>
  );
}

function Cell({ className = GRID }: { className?: string }) {
  return <div className={`border-r-2 border-b-2 ${className}`} />;
}

// Columns B to E of a row. Fills hide the grid lines they touch.
function MiddleCells({ n }: { n: number }) {
  if (n === 4) {
    return (
      <>
        <div className="col-span-3 border-r-2 border-r-[#d4d4d4] border-b-2 border-b-[#a0d060] pl-[5px] whitespace-nowrap">Outdoor wood fired Pizza Oven</div>
        <Cell className="border-r-[#d4d4d4] border-b-[#a0d060]" />
      </>
    );
  }
  if (n === 5) {
    return <div className="col-span-4 bg-[#a0d060] pl-[5px]"><TextLines lines={RATIONALE} /></div>;
  }
  if (n === 6) {
    return <div className="col-span-4 bg-[#a0d060] pl-[5px]"><TextLines lines={ASSUMPTIONS} /></div>;
  }
  if (n === 8) {
    return <><Money value="(93,500)" neg /><Cell /><Cell /><Cell /></>;
  }
  if (n >= 9 && n <= 13) {
    return <><Money value="34,000" /><Cell /><Cell /><Cell /></>;
  }
  if (n === 14 || n === 17) {
    return <><Cell className="border-r-[#d4d4d4] border-b-[#ffff54]" /><Cell /><Cell /><Cell /></>;
  }
  if (n === 15) {
    return (
      <>
        <div className="bg-[#ffff54]" />
        <Cell className="border-r-[#d4d4d4] border-b-[#ffff54]" />
        <Cell className="border-r-[#d4d4d4] border-b-[#ffff54]" />
        <Cell className="border-r-[#d4d4d4] border-b-[#ffff54]" />
      </>
    );
  }
  if (n === 16) {
    return <div className="col-span-4 bg-[#ffff54]" />;
  }
  if (n === 18 || n === 19) {
    return <><div className="bg-[#ffff54]" /><Cell /><Cell /><Cell /></>;
  }
  return <><Cell /><Cell /><Cell /><Cell /></>;
}

function SheetRow({ n }: { n: number }) {
  const fillA =
    n === 5 || n === 6
      ? "border-r-[#a0d060]"
      : n === 15 || n === 16 || n === 18 || n === 19
        ? "border-r-[#ffff54]"
        : "border-r-[#d4d4d4]";
  const rest = COLS.slice(3);
  return (
    <div className={`grid grid-cols-[39px_246px_114px_repeat(26,98px)] ${rowHeight(n)} shrink-0`}>
      {n === 16 ? (
        <div className="bg-[#5a5a5a] border-r-4 border-[#37734a] text-white font-bold text-[16.5px] leading-[24px] flex items-end justify-center pb-[2px] pr-[2px]">16</div>
      ) : (
        <div className="bg-[#161616] border-r-2 border-r-[#b5b5b5] border-b-2 border-b-[#7a7a7a] text-white font-bold text-[16.5px] leading-[24px] flex items-end justify-center pr-[2px]">{n}</div>
      )}
      <div className={`border-b-2 border-r-2 border-b-[#d4d4d4] ${fillA} pl-[5px] whitespace-pre`}>{LABELS[n] ?? ""}</div>
      <MiddleCells n={n} />
      {rest.map((c, i) =>
        n === 16 && c === "I" ? (
          <div key={i} className={`relative border-r-2 border-b-2 ${GRID}`}>
            <div className="absolute left-[-3px] top-[-4px] w-[104px] h-[130px] border-4 border-[#3b7049]" />
            <div className="absolute left-[93px] top-[117px] w-[14px] h-[14px] bg-[#3b7049] border-2 border-white" />
          </div>
        ) : (
          <Cell key={i} />
        )
      )}
    </div>
  );
}

function Sheet() {
  return (
    <div className="flex-1 min-h-0 overflow-hidden bg-white flex flex-col font-['Lato',sans-serif] text-[16.8px] leading-[24px] text-[#111111]">
      <ColumnHeader />
      {ROWS.map((n) => (
        <SheetRow key={n} n={n} />
      ))}
    </div>
  );
}

function SheetTabs() {
  return (
    <div className="h-[52px] bg-[#333333] border-t-2 border-[#5a5a5a] flex items-stretch shrink-0">
      <div className="w-[121px] flex items-center shrink-0">
        <div className="ml-[30px] w-0 h-0 border-y-[10px] border-y-transparent border-r-[13px] border-r-[#666666]" />
        <div className="ml-[33px] w-0 h-0 border-y-[10px] border-y-transparent border-l-[13px] border-l-[#666666]" />
      </div>
      <div className="w-[166px] bg-[#222222] border-l-2 border-[#5a5a5a] flex items-center justify-center text-[24.5px] text-[#888888]">Project 1</div>
      <div className="w-[169px] flex flex-col bg-[#444444]">
        <div className="h-[44px] -mt-[2px] pt-[6px] bg-white rounded-b-[6px] flex items-center justify-center text-[24px] font-semibold text-[#3f7f52]">Project 2</div>
      </div>
      <div className="w-[166px] bg-[#222222] flex items-center justify-center text-[24px] text-[#888888]">Project 3</div>
      <div className="w-[77px] border-x-2 border-[#5a5a5a] flex items-center justify-center mb-[8px]">
        <svg viewBox="0 0 20 20" className="w-[20px] h-[20px]">
          <path d="M10 0V20M0 10H20" stroke="#aaaaaa" strokeWidth="4" />
        </svg>
      </div>
    </div>
  );
}

function StatusBar() {
  return (
    <div className="h-[46px] shrink-0 flex items-center border-t-2 border-black bg-gradient-to-b from-[#4c4c4c] to-[#3a3a3a] text-[#e4e4e4]">
      <span className="ml-[49px] w-[109px] text-[24px] leading-[30px]">Ready</span>
      <svg viewBox="0 0 30 32" fill="none" stroke="#e4e4e4" strokeWidth="1.8" className="w-[30px] h-[32px]">
        <circle cx="14" cy="4" r="3" />
        <path d="M2 8C6 10 9 12 14 12 19 12 22 10 26 8 27 10 26 12 25 13 22 15 20 15 19 16V21L15 22 12 31 7 30 9 21 9 16C6 14 3 13 1 11Z" strokeLinejoin="round" />
        <path d="M18 22 29 31M29 22 18 31" />
      </svg>
      <span className="ml-[7px] text-[24px] leading-[30px] whitespace-nowrap">Accessibility: Investigate</span>
      <div className="ml-auto w-[74px] h-full bg-[#5a5a5a] flex items-center justify-center shrink-0">
        <svg viewBox="0 0 26 26" fill="none" stroke="#ffffff" strokeWidth="2" className="w-[26px] h-[26px]">
          <path d="M1 1H25V25H1ZM9 1V25M17 1V25M1 9H25M1 17H25" />
        </svg>
      </div>
      <svg viewBox="0 0 28 26" fill="none" stroke="#ffffff" strokeWidth="2" className="ml-[21px] w-[28px] h-[26px]">
        <rect x="1" y="1" width="26" height="24" />
        <path d="M7 5H21V21H7ZM10 9H18M10 13H18M10 17H18" />
      </svg>
      <svg viewBox="0 0 28 26" fill="none" stroke="#ffffff" strokeWidth="2" className="ml-[43px] w-[28px] h-[26px]">
        <rect x="1" y="1" width="26" height="24" />
        <path d="M1 17H27M10 1V17M18 1V17" />
      </svg>
      <div className="ml-[38px] w-[16px] h-[4px] bg-white" />
      <div className="ml-[14px] w-[200px] h-[9px] rounded-full bg-[#7d7d7d] relative">
        <div className="absolute left-[61px] top-[-12px] w-[32px] h-[33px] rounded-full bg-[#a0a0a0]" />
        <div className="absolute left-[97px] top-0 w-[6px] h-[9px] rounded-full bg-[#4c4c4c]" />
      </div>
      <svg viewBox="0 0 17 17" className="ml-[13px] w-[17px] h-[17px]">
        <path d="M8.5 0V17M0 8.5H17" stroke="#ffffff" strokeWidth="4" />
      </svg>
      <span className="ml-[41px] mr-[55px] text-[24px] leading-[30px] font-light">75%</span>
    </div>
  );
}

export default function App() {
  return (
    <div className="w-[2880px] h-[1800px] flex flex-col overflow-hidden bg-[#292929] font-['Inter',sans-serif]">
      <TitleBar />
      <RibbonTabs />
      <Ribbon />
      <FormulaBar />
      <div className="h-[5px] shrink-0 bg-[#e2e2e2] border-y border-[#8a8a8a]" />
      <Sheet />
      <SheetTabs />
      <StatusBar />
    </div>
  );
}
